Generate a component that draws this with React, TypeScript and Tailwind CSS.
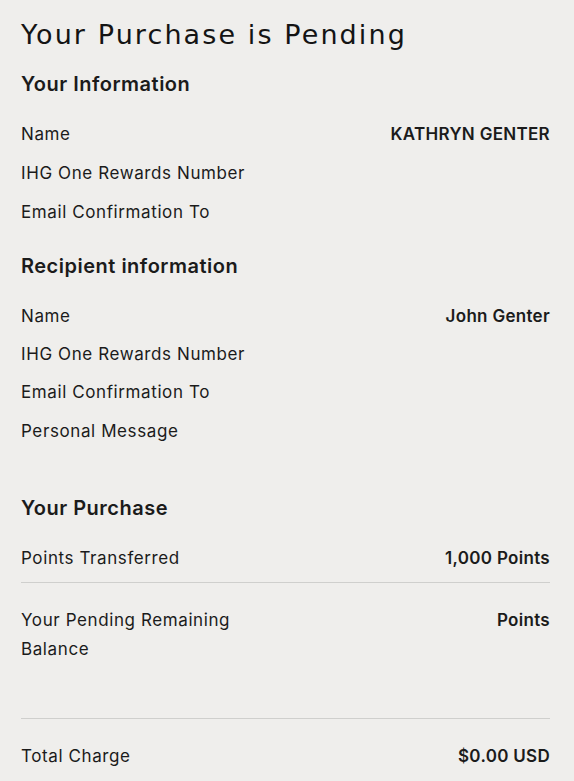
export default function App() {
  return (
    <div className="min-h-screen bg-[#efeeec] pl-[21px] pr-[24px] pt-[17px] text-[#1b1b1b]" style={{ fontFamily: 'Inter, sans-serif' }}>
      <h1
        className="text-[27px] leading-[36px] font-normal tracking-[2.1px] text-[#141414]"
        style={{ fontFamily: '"DejaVu Sans", sans-serif' }}
      >
        Your Purchase is Pending
      </h1>

      <h2 className="mt-[17px] text-[20px] leading-[28px] font-semibold tracking-[0.5px]">Your Information</h2>
      <div className="mt-[22px] flex flex-col gap-[10px] text-[17px] leading-[29px] tracking-[0.6px]">
        <Row label="Name" value="KATHRYN GENTER" />
        <Row label="IHG One Rewards Number" />
        <Row label="Email Confirmation To" />
      </div>

      <h2 className="mt-[25px] text-[20px] leading-[28px] font-semibold tracking-[0.5px]">Recipient information</h2>
      <div className="mt-[22px] flex flex-col gap-[9.2px] text-[17px] leading-[29px] tracking-[0.6px]">
        <Row label="Name" value="John Genter" />
        <Row label="IHG One Rewards Number" />
        <Row label="Email Confirmation To" />
        <Row label="Personal Message" />
      </div>

      <h2 className="mt-[48px] text-[20px] leading-[28px] font-semibold tracking-[0.5px]">Your Purchase</h2>
      <div className="mt-[22px] text-[17px] leading-[29px] tracking-[0.6px]">
        <Row label="Points Transferred" value="1,000 Points" />
        <div className="mt-[9px] border-t border-[#cfcfcd]" />
        <div className="mt-[23px] flex justify-between">
          <span className="w-[235px]">Your Pending Remaining Balance</span>
          <span className="font-semibold tracking-[0.3px]">Points</span>
        </div>
        <div className="mt-[54px] border-t border-[#cfcfcd]" />
        <div className="mt-[23px]">
          <Row label="Total Charge" value="$0.00 USD" />
        </div>
      </div>
    </div>
  );
}

function Row({ label, value }: { label: string; value?: string }) {
  return (
    <div className="flex justify-between">
      <span>{label}</span>
      {value && <span className="font-semibold tracking-[0.3px]">{value}</span>}
    </div>
  );
}
